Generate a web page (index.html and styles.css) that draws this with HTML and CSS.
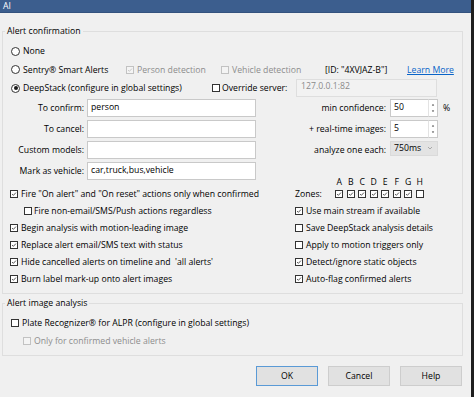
FILE: index.html
```html
<!DOCTYPE html>
<html>
<head>
<meta charset="utf-8">
<link rel="stylesheet" href="styles.css">
</head>
<body>
<div class="win">
  <div class="titlebar"><span class="title">AI</span></div>

  <fieldset class="group g1">
    <legend>Alert confirmation</legend>

    <div class="row r-none">
      <span class="opt c-main"><span class="radio"></span><span>None</span></span>
    </div>

    <div class="row r-sentry">
      <span class="opt c-main c-sentry"><span class="radio"></span><span>Sentry® Smart Alerts</span></span>
      <span class="opt c-person dis"><span class="cb off-dis"><svg viewBox="0 0 8 8"><polyline points="1.4,4 3.2,5.8 6.6,2.1"/></svg></span><span>Person detection</span></span>
      <span class="opt c-vehicle dis"><span class="cb off-dis"></span><span>Vehicle detection</span></span>
      <span class="c-id">[ID: "4XVJAZ-B"]</span>
      <a class="link">Learn More</a>
    </div>

    <div class="row r-deep">
      <span class="opt c-deep"><span class="radio on"><span class="dot"></span></span><span>DeepStack (configure in global settings)</span></span>
      <span class="opt c-override"><span class="cb"></span><span>Override server:</span></span>
      <span class="edit server">127.0.0.1:82</span>
    </div>

    <div class="form">
      <div class="fcol fleft">
        <div class="frow"><span class="flabel">To confirm:</span><span class="edit wide">person</span></div>
        <div class="frow"><span class="flabel">To cancel:</span><span class="edit wide"></span></div>
        <div class="frow"><span class="flabel">Custom models:</span><span class="edit wide"></span></div>
        <div class="frow"><span class="flabel">Mark as vehicle:</span><span class="edit wide">car,truck,bus,vehicle</span></div>
      </div>
      <div class="fcol fright">
        <div class="frow">
          <span class="rlabel">min confidence:</span>
          <span class="spin"><span class="edit num">50</span><span class="arrows"><svg viewBox="0 0 10 18"><polygon points="3.5,6 6.5,6 5,4"/><polygon points="3.5,12 6.5,12 5,14"/></svg></span></span>
          <span class="pct">%</span>
        </div>
        <div class="frow">
          <span class="rlabel">+ real-time images:</span>
          <span class="spin"><span class="edit num">5</span><span class="arrows"><svg viewBox="0 0 10 18"><polygon points="3.5,6 6.5,6 5,4"/><polygon points="3.5,12 6.5,12 5,14"/></svg></span></span>
        </div>
        <div class="frow">
          <span class="rlabel">analyze one each:</span>
          <span class="select"><span>750ms</span><svg viewBox="0 0 8 6"><polyline points="2,2 4,4 6,2"/></svg></span>
        </div>
      </div>
    </div>

    <div class="opts">
      <div class="ocol oleft">
        <div class="orow"><span class="cb"><svg viewBox="0 0 8 8"><polyline points="1.4,4 3.2,5.8 6.6,2.1"/></svg></span><span>Fire "On alert" and "On reset" actions only when confirmed</span></div>
        <div class="orow sub"><span class="cb"></span><span>Fire non-email/SMS/Push actions regardless</span></div>
        <div class="orow"><span class="cb"><svg viewBox="0 0 8 8"><polyline points="1.4,4 3.2,5.8 6.6,2.1"/></svg></span><span>Begin analysis with motion-leading image</span></div>
        <div class="orow"><span class="cb"><svg viewBox="0 0 8 8"><polyline points="1.4,4 3.2,5.8 6.6,2.1"/></svg></span><span>Replace alert email/SMS text with status</span></div>
        <div class="orow"><span class="cb"><svg viewBox="0 0 8 8"><polyline points="1.4,4 3.2,5.8 6.6,2.1"/></svg></span><span>Hide cancelled alerts on timeline and &nbsp;'all alerts'</span></div>
        <div class="orow"><span class="cb"><svg viewBox="0 0 8 8"><polyline points="1.4,4 3.2,5.8 6.6,2.1"/></svg></span><span>Burn label mark-up onto alert images</span></div>
      </div>
      <div class="ocol oright">
        <div class="zletters"><span>A</span><span>B</span><span>C</span><span>D</span><span>E</span><span>F</span><span>G</span><span>H</span></div>
        <div class="orow zones">
          <span class="zlabel">Zones:</span>
          <span class="zcell"><span class="cb"><svg viewBox="0 0 8 8"><polyline points="1.4,4 3.2,5.8 6.6,2.1"/></svg></span></span>
          <span class="zcell"><span class="cb"><svg viewBox="0 0 8 8"><polyline points="1.4,4 3.2,5.8 6.6,2.1"/></svg></span></span>
          <span class="zcell"><span class="cb"><svg viewBox="0 0 8 8"><polyline points="1.4,4 3.2,5.8 6.6,2.1"/></svg></span></span>
          <span class="zcell"><span class="cb"><svg viewBox="0 0 8 8"><polyline points="1.4,4 3.2,5.8 6.6,2.1"/></svg></span></span>
          <span class="zcell"><span class="cb"><svg viewBox="0 0 8 8"><polyline points="1.4,4 3.2,5.8 6.6,2.1"/></svg></span></span>
          <span class="zcell"><span class="cb"><svg viewBox="0 0 8 8"><polyline points="1.4,4 3.2,5.8 6.6,2.1"/></svg></span></span>
          <span class="zcell"><span class="cb"><svg viewBox="0 0 8 8"><polyline points="1.4,4 3.2,5.8 6.6,2.1"/></svg></span></span>
          <span class="zcell"><span class="cb"></span></span>
        </div>
        <div class="orow"><span class="cb"><svg viewBox="0 0 8 8"><polyline points="1.4,4 3.2,5.8 6.6,2.1"/></svg></span><span>Use main stream if available</span></div>
        <div class="orow"><span class="cb"></span><span>Save DeepStack analysis details</span></div>
        <div class="orow"><span class="cb"></span><span>Apply to motion triggers only</span></div>
        <div class="orow"><span class="cb"><svg viewBox="0 0 8 8"><polyline points="1.4,4 3.2,5.8 6.6,2.1"/></svg></span><span>Detect/ignore static objects</span></div>
        <div class="orow"><span class="cb"><svg viewBox="0 0 8 8"><polyline points="1.4,4 3.2,5.8 6.6,2.1"/></svg></span><span>Auto-flag confirmed alerts</span></div>
      </div>
    </div>
  </fieldset>

  <fieldset class="group g2">
    <legend>Alert image analysis</legend>
    <div class="arow"><span class="cb"></span><span>Plate Recognizer® for ALPR (configure in global settings)</span></div>
    <div class="arow sub dis"><span class="cb off-dis"></span><span>Only for confirmed vehicle alerts</span></div>
  </fieldset>

  <div class="buttons">
    <span class="btn default">OK</span>
    <span class="btn">Cancel</span>
    <span class="btn">Help</span>
  </div>
</div>
</body>
</html>
```

FILE: styles.css
```css
html, body {
  margin: 0;
  padding: 0;
}
body {
  width: 474px;
  height: 397px;
  overflow: hidden;
  background: #1e1e1e;
  font-family: "Open Sans", "Noto Sans", sans-serif;
  font-size: 8.7px;
  color: #000;
}
.win {
  width: 471px;
  height: 397px;
  background: #f0f0f0;
  display: flex;
  flex-direction: column;
}
.titlebar {
  height: 13px;
  background: #3c5e8e;
  border-bottom: 1px solid #34527e;
  box-sizing: border-box;
  display: flex;
  align-items: center;
  padding-left: 3px;
}
.title {
  color: #fff;
  line-height: 12px;
}

/* group boxes */
.group {
  margin: 0 0 0 2px;
  padding: 0;
  width: 461px;
  box-sizing: border-box;
  border: 1px solid #dedede;
  min-inline-size: 0;
}
.group legend {
  margin-left: 2px;
  padding: 0 2px;
  line-height: 12px;
}
.g1 {
  margin-top: 12px;
  padding-top: 5px;
  padding-bottom: 6px;
}
.g2 {
  margin-top: 3px;
  padding-top: 5px;
  padding-bottom: 5px;
}

/* controls */
.cb {
  width: 8px;
  height: 8px;
  box-sizing: border-box;
  border: 1px solid #333;
  background: #fff;
  flex: none;
  display: inline-flex;
}
.cb svg {
  width: 6px;
  height: 6px;
  margin: 0;
}
.cb svg polyline {
  fill: none;
  stroke: #222;
  stroke-width: 1;
}
.cb.off-dis {
  border-color: #c2c2c2;
  background: #f4f4f4;
}
.cb.off-dis svg polyline {
  stroke: #b8b8b8;
}
.radio {
  width: 9px;
  height: 9px;
  box-sizing: border-box;
  border: 1px solid #333;
  border-radius: 50%;
  background: #fff;
  flex: none;
  display: inline-flex;
  align-items: center;
  justify-content: center;
}
.radio .dot {
  width: 4px;
  height: 4px;
  border-radius: 50%;
  background: #1a1a1a;
}
.dis {
  color: #8d8d8d;
}

/* top rows */
.row {
  display: flex;
  align-items: center;
  white-space: nowrap;
}
.r-none { height: 18px; }
.r-sentry { height: 19px; }
.r-deep { height: 18px; }
.opt {
  display: flex;
  align-items: center;
  gap: 3px;
}
.c-main {
  padding-left: 8px;
  width: 123px;
  box-sizing: border-box;
}
.c-person {
  width: 95px;
}
.c-vehicle {
  width: 104px;
}
.c-id {
  width: 82px;
}
.link {
  color: #0a64c8;
  text-decoration: underline;
}
.c-deep {
  padding-left: 8px;
  width: 209px;
  box-sizing: border-box;
}
.c-override {
  width: 84px;
  gap: 2px;
}
.edit {
  height: 18px;
  box-sizing: border-box;
  border: 1px solid #c9c9c9;
  background: #fff;
  display: flex;
  align-items: center;
  padding: 0 3px 2px;
  color: #000;
}
.edit.server {
  width: 141px;
  background: #f2f2f2;
  border-color: #dedede;
  color: #8a8a8a;
  padding-left: 4px;
  padding-bottom: 4px;
}

/* form */
.form {
  display: flex;
  padding-top: 2px;
}
.fcol {
  display: flex;
  flex-direction: column;
  gap: 3px;
}
.frow {
  display: flex;
  align-items: center;
  height: 18px;
  white-space: nowrap;
}
.fleft {
  width: 253px;
}
.flabel {
  width: 81px;
  text-align: right;
  margin-right: 3px;
}
.edit.wide {
  width: 169px;
}
.rlabel {
  width: 130px;
  text-align: right;
  margin-right: 4px;
}
.spin {
  display: flex;
  width: 48px;
  height: 18px;
}
.edit.num {
  width: 38px;
  border-right: none;
}
.arrows {
  width: 10px;
  height: 18px;
  box-sizing: border-box;
  border: 1px solid #c9c9c9;
  border-left: 1px solid #e3e3e3;
  background: #fff;
  display: flex;
}
.arrows svg {
  width: 8px;
  height: 16px;
}
.arrows polygon {
  fill: #333;
}
.pct {
  margin-left: 5px;
}
.select {
  width: 48px;
  height: 15px;
  box-sizing: border-box;
  background: #e3e3e3;
  border: 1px solid #dadada;
  display: flex;
  align-items: center;
  justify-content: space-between;
  padding: 0 3px 1px 3px;
  margin-top: -3px;
}
.select svg {
  width: 8px;
  height: 6px;
}
.select polyline {
  fill: none;
  stroke: #999;
  stroke-width: 0.8;
}

/* option checkboxes */
.opts {
  display: flex;
}
.ocol {
  display: flex;
  flex-direction: column;
}
.oleft {
  width: 292px;
  padding-top: 5px;
  box-sizing: border-box;
  padding-left: 7px;
}
.orow {
  height: 17px;
  display: flex;
  align-items: center;
  gap: 3px;
  white-space: nowrap;
}
.orow.sub {
  padding-left: 14px;
  gap: 2px;
}
.oright {
  width: 160px;
}
.zletters {
  height: 5px;
  line-height: 5px;
  padding-left: 38.5px;
  display: flex;
  font-size: 8.7px;
}
.zletters span {
  width: 11.5px;
  text-align: center;
}
.zones {
  gap: 0;
}
.zlabel {
  width: 38.5px;
}
.zcell {
  width: 11.5px;
  display: flex;
  justify-content: center;
}

/* analysis group */
.arow {
  height: 18px;
  display: flex;
  align-items: center;
  gap: 3px;
  padding-left: 8px;
  white-space: nowrap;
}
.arow.sub {
  padding-left: 20px;
}

/* buttons */
.buttons {
  display: flex;
  justify-content: flex-end;
  gap: 10px;
  width: 462px;
  margin-top: 10px;
}
.btn {
  width: 62px;
  height: 20px;
  box-sizing: border-box;
  border: 1px solid #cdcdcd;
  background: #e1e1e1;
  display: flex;
  align-items: center;
  justify-content: center;
  padding-bottom: 1px;
}
.btn.default {
  border-color: #5a9ad6;
}
```
